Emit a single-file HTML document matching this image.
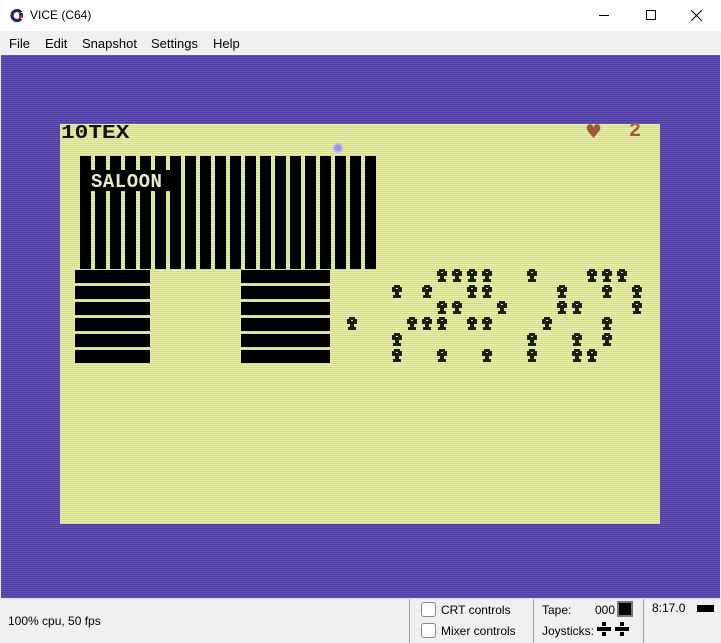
<!DOCTYPE html><html><head><meta charset="utf-8"><style>
*{margin:0;padding:0;box-sizing:border-box}
body{width:721px;height:642px;overflow:hidden;background:#f0f0f0;font-family:"Liberation Sans",sans-serif;font-size:13px;color:#000;position:relative}
.a{position:absolute}
#title{left:0;top:0;width:721px;height:31px;background:#fff}
#menu{left:0;top:31px;width:721px;height:24px;background:#f0f0f0}
#menu span{position:absolute;top:5px}
#scr{left:1px;top:55px;width:719px;height:543px;background:#5a47ae;background-image:repeating-linear-gradient(#6452b8 0 1px,#4f3da2 1px 2px)}
#c64{left:60px;top:124px;width:600px;height:400px;background:#dde69a;background-image:repeating-linear-gradient(#ecf0aa 0 1px,#d2da8c 1px 2px)}
.k{background:#000}
.st{position:absolute;top:0;width:1px;height:44px;background:#a0a0a0}
.cb{position:absolute;width:15px;height:15px;border:1px solid #888;border-radius:3px;background:#fff}
</style></head><body>
<div id="title" class="a">
<svg class="a" style="left:10px;top:9px" width="14" height="13"><path d="M11 3.5A5 5 0 1 0 11 9.5" stroke="#1a2a6a" stroke-width="3.2" fill="none"/><rect x="9" y="4" width="4" height="2.5" fill="#1a2a6a"/><rect x="9" y="6.5" width="4" height="2.5" fill="#e02020"/></svg>
<span class="a" style="left:30px;top:8px;font-size:12px">VICE (C64)</span>
<div class="a" style="left:599px;top:15px;width:10px;height:1px;background:#000"></div>
<div class="a" style="left:646px;top:10px;width:10px;height:10px;border:1px solid #000"></div>
<svg class="a" style="left:691px;top:10px" width="11" height="11"><path d="M0 0L11 11M11 0L0 11" stroke="#000"/></svg>
</div>
<div id="menu" class="a"><span style="left:9px">File</span><span style="left:45px">Edit</span><span style="left:82px">Snapshot</span><span style="left:151px">Settings</span><span style="left:213px">Help</span></div>
<div id="scr" class="a"></div>
<div id="c64" class="a">
<div class="a" style="left:1px;top:-2px;font:bold 19px 'Liberation Mono',monospace;letter-spacing:0px;color:#111;transform:scaleX(1.2);transform-origin:left">10TEX</div>
<div class="a" style="left:525px;top:-3px;font:bold 19px 'DejaVu Sans',sans-serif;color:#9a5a3a">♥</div>
<div class="a" style="left:569px;top:-4px;font:bold 20px 'Liberation Mono',monospace;color:#9a6040">2</div>
<div class="a" style="left:273px;top:19px;width:10px;height:10px;border-radius:50%;background:#9c94e6;border:2px solid #b8b2f0"></div>
<svg class="a" style="left:20px;top:32px" width="296" height="113">
<g fill="#000">
<rect x="0" y="0" width="11" height="113"/><rect x="15" y="0" width="11" height="113"/><rect x="30" y="0" width="11" height="113"/><rect x="45" y="0" width="11" height="113"/><rect x="60" y="0" width="11" height="113"/><rect x="75" y="0" width="11" height="113"/><rect x="90" y="0" width="11" height="113"/><rect x="105" y="0" width="11" height="113"/><rect x="120" y="0" width="11" height="113"/><rect x="135" y="0" width="11" height="113"/><rect x="150" y="0" width="11" height="113"/><rect x="165" y="0" width="11" height="113"/><rect x="180" y="0" width="11" height="113"/><rect x="195" y="0" width="11" height="113"/><rect x="210" y="0" width="11" height="113"/><rect x="225" y="0" width="11" height="113"/><rect x="240" y="0" width="11" height="113"/><rect x="255" y="0" width="11" height="113"/><rect x="270" y="0" width="11" height="113"/><rect x="285" y="0" width="11" height="113"/>
<rect x="8" y="14" width="92" height="21"/>
</g>
<text x="11" y="31" font-family="Liberation Mono,monospace" font-weight="bold" font-size="19" fill="#e8ecc8" letter-spacing="0.5">SALOON</text>
</svg>
<div class="a" style="left:15px;top:146px;width:75px">
<div class="k" style="height:13px;margin-bottom:3px"></div><div class="k" style="height:13px;margin-bottom:3px"></div><div class="k" style="height:13px;margin-bottom:3px"></div><div class="k" style="height:13px;margin-bottom:3px"></div><div class="k" style="height:13px;margin-bottom:3px"></div><div class="k" style="height:13px"></div></div>
<div class="a" style="left:181px;top:146px;width:89px">
<div class="k" style="height:13px;margin-bottom:3px"></div><div class="k" style="height:13px;margin-bottom:3px"></div><div class="k" style="height:13px;margin-bottom:3px"></div><div class="k" style="height:13px;margin-bottom:3px"></div><div class="k" style="height:13px;margin-bottom:3px"></div><div class="k" style="height:13px"></div></div>
<svg class="a" style="left:0;top:0" width="600" height="400">
<defs><g id="t" fill="#1a2010"><rect x="4" y="0" width="6" height="3"/><rect x="2" y="2" width="4" height="5"/><rect x="8" y="2" width="4" height="5"/><rect x="5" y="4" width="4" height="7"/><rect x="3" y="10" width="8" height="3"/></g></defs>
<g transform="translate(0,145)">
<use href="#t" x="375"/><use href="#t" x="390"/><use href="#t" x="405"/><use href="#t" x="420"/><use href="#t" x="465"/><use href="#t" x="525"/><use href="#t" x="540"/><use href="#t" x="555"/>
</g>
<g transform="translate(0,161)">
<use href="#t" x="330"/><use href="#t" x="360"/><use href="#t" x="405"/><use href="#t" x="420"/><use href="#t" x="495"/><use href="#t" x="540"/><use href="#t" x="570"/>
</g>
<g transform="translate(0,177)">
<use href="#t" x="375"/><use href="#t" x="390"/><use href="#t" x="435"/><use href="#t" x="495"/><use href="#t" x="510"/><use href="#t" x="570"/>
</g>
<g transform="translate(0,193)">
<use href="#t" x="285"/><use href="#t" x="345"/><use href="#t" x="360"/><use href="#t" x="375"/><use href="#t" x="405"/><use href="#t" x="420"/><use href="#t" x="480"/><use href="#t" x="540"/>
</g>
<g transform="translate(0,209)">
<use href="#t" x="330"/><use href="#t" x="465"/><use href="#t" x="510"/><use href="#t" x="540"/>
</g>
<g transform="translate(0,225)">
<use href="#t" x="330"/><use href="#t" x="375"/><use href="#t" x="420"/><use href="#t" x="465"/><use href="#t" x="510"/><use href="#t" x="525"/>
</g>
</svg>
</div>
<div class="a" style="left:0;top:598px;width:721px;height:44px;background:#f0f0f0;border-top:1px solid #ddd;font-size:12px">
<span class="a" style="left:8px;top:15px">100% cpu, 50 fps</span>
<div class="st" style="left:409px"></div><div class="st" style="left:533px"></div><div class="st" style="left:643px"></div>
<div class="cb" style="left:421px;top:3px"></div><span class="a" style="left:441px;top:4px">CRT controls</span>
<div class="cb" style="left:421px;top:24px"></div><span class="a" style="left:441px;top:25px">Mixer controls</span>
<span class="a" style="left:542px;top:4px">Tape:</span><span class="a" style="left:595px;top:4px">000</span>
<div class="a" style="left:617px;top:2px;width:16px;height:16px;background:#777;padding:2px"><div style="width:12px;height:12px;background:#000"></div></div>
<span class="a" style="left:542px;top:25px">Joysticks:</span>
<svg class="a" style="left:597px;top:23px" width="40" height="16" fill="#000"><rect x="5" y="0" width="4" height="4"/><rect x="0" y="5" width="14" height="4"/><rect x="5" y="10" width="4" height="4"/><rect x="23" y="0" width="4" height="4"/><rect x="18" y="5" width="14" height="4"/><rect x="23" y="10" width="4" height="4"/></svg>
<span class="a" style="left:652px;top:2px">8:17.0</span>
<div class="a" style="left:697px;top:6px;width:17px;height:7px;background:#000"></div>
</div>
</body></html>
